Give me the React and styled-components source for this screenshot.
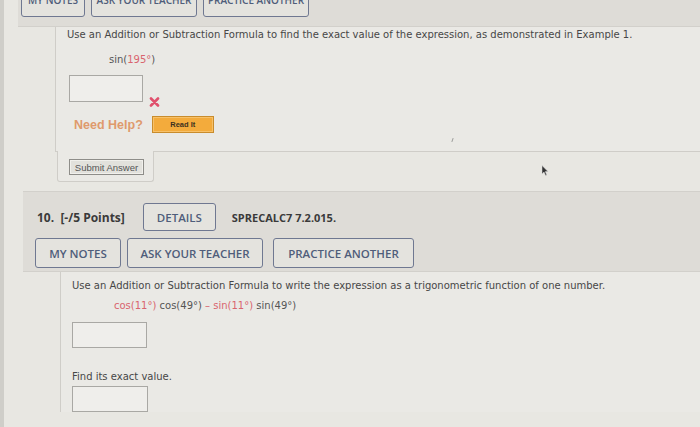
import React from "react";
import styled, { createGlobalStyle } from "styled-components";

const Global = createGlobalStyle`
  html, body { margin: 0; padding: 0; }
  body {
    background: #e7e6e1;
    width: 700px;
    height: 427px;
    overflow: hidden;
    font-family: "DejaVu Sans", Verdana, sans-serif;
  }
`;

const Page = styled.div`
  position: relative;
  width: 700px;
  height: 427px;
  overflow: hidden;
  border-left: 4px solid #cfcec9;
  box-sizing: border-box;
  background: #e8e7e2;
`;

const QHeader = styled.div`
  margin-left: ${(p) => p.$left}px;
  margin-top: ${(p) => p.$top}px;
  background: #dedcd7;
  border-top: 1px solid #d2d0cb;
  border-bottom: 1px solid #d2d0cb;
  padding: ${(p) => p.$pad};
  display: flex;
  flex-direction: column;
  gap: ${(p) => p.$gap || 8}px;
`;

const Row = styled.div`
  display: flex;
  align-items: center;
  gap: ${(p) => p.$gap}px;
`;

const OutlineBtn = styled.div`
  box-sizing: border-box;
  height: ${(p) => p.$h || 28}px;
  width: ${(p) => p.$w}px;
  margin-left: ${(p) => p.$ml || 0}px;
  border: 1.5px solid #6f7891;
  border-radius: 3px;
  background: #e4e3de;
  display: flex;
  align-items: center;
  justify-content: center;
  white-space: nowrap;
  overflow: hidden;
  font-family: "Open Sans", sans-serif;
  font-weight: 600;
  font-size: ${(p) => p.$fs || 11.5}px;
  color: #4f5d7a;
`;

const HeadText = styled.span`
  font-family: "Open Sans", sans-serif;
  font-weight: 700;
  font-size: ${(p) => p.$fs || 12}px;
  color: #3a3a3a;
  white-space: pre;
  margin-left: ${(p) => p.$ml || 0}px;
  margin-right: ${(p) => p.$mr || 0}px;
`;

const Body = styled.div`
  margin-left: ${(p) => p.$left}px;
  background: #eae9e5;
  border-left: 1px solid #cfcdc8;
  border-bottom: ${(p) => (p.$bottom ? "1px solid #cfcdc8" : "none")};
  padding: ${(p) => p.$pad};
  display: flex;
  flex-direction: column;
  align-items: flex-start;
  height: ${(p) => (p.$h ? p.$h + "px" : "auto")};
  box-sizing: border-box;
`;

const Prompt = styled.div`
  font-size: 10px;
  line-height: 12px;
  color: #474747;
  white-space: nowrap;
  margin-bottom: ${(p) => p.$mb || 0}px;
`;

const Expr = styled.div`
  font-size: 10px;
  line-height: 12px;
  color: #555;
  margin-left: ${(p) => p.$ml}px;
  margin-bottom: ${(p) => p.$mb || 0}px;
  white-space: pre;
`;

const Red = styled.span`
  color: #d9646e;
`;

const AnswerBox = styled.div`
  box-sizing: border-box;
  width: ${(p) => p.$w || 74}px;
  height: ${(p) => p.$h || 27}px;
  border: 1px solid #a9a8a4;
  background: #efeeeb;
  margin-left: ${(p) => p.$ml || 0}px;
  margin-bottom: ${(p) => p.$mb || 0}px;
`;

const AnswerRow = styled.div`
  display: flex;
  align-items: flex-end;
  gap: 6px;
`;

const HelpRow = styled.div`
  display: flex;
  align-items: center;
  gap: 9px;
  margin-left: 7px;
  margin-top: 14px;
`;

const NeedHelp = styled.span`
  font-family: "Liberation Sans", Arial, sans-serif;
  font-weight: 700;
  font-size: 12.5px;
  color: #df9a6c;
`;

const ReadIt = styled.div`
  box-sizing: border-box;
  width: 62px;
  height: 17px;
  background: #f3ab3c;
  border: 1px solid #c98c2c;
  box-shadow: inset 0 0 0 1px #f7c169;
  display: flex;
  align-items: center;
  justify-content: center;
  font-family: "Liberation Sans", Arial, sans-serif;
  font-weight: 700;
  font-size: 7.5px;
  color: #3b3020;
`;

const SubmitTab = styled.div`
  margin-left: 53px;
  width: 97px;
  height: 31px;
  margin-top: -1px;
  box-sizing: border-box;
  background: #eae9e5;
  border: 1px solid #cfcdc8;
  border-top: none;
  border-radius: 0 0 3px 3px;
  padding: 8px 0 0 11px;
`;

const SubmitBtn = styled.div`
  box-sizing: border-box;
  width: 75px;
  height: 16px;
  border: 1px solid #8e8d89;
  background: #e2e1dc;
  box-shadow: inset 0 0 0 1px #f1f0ec;
  display: flex;
  align-items: center;
  justify-content: center;
  font-family: "Liberation Sans", Arial, sans-serif;
  font-size: 9.5px;
  color: #555;
`;

const Cursor = styled.svg`
  position: absolute;
  left: 537px;
  top: 165px;
`;

const Speck = styled.div`
  position: absolute;
  left: ${(p) => p.$x}px;
  top: ${(p) => p.$y}px;
  width: 1px;
  height: 4px;
  background: #777;
  transform: rotate(20deg);
  opacity: 0.7;
`;

export default function App() {
  return (
    <>
      <Global />
      <Page>
        <QHeader $left={14} $top={-19} $pad="0 0 9px 3px">
          <Row $gap={6}>
            <OutlineBtn $w={64} $h={35} $fs={10}>MY NOTES</OutlineBtn>
            <OutlineBtn $w={106} $h={35} $fs={10}>ASK YOUR TEACHER</OutlineBtn>
            <OutlineBtn $w={106} $h={35} $fs={10}>PRACTICE ANOTHER</OutlineBtn>
          </Row>
        </QHeader>
        <Body $left={51} $bottom $h={125} $pad="2px 0 0 11px">
          <Prompt $mb={13}>
            Use an Addition or Subtraction Formula to find the exact value of the expression, as demonstrated in Example 1.
          </Prompt>
          <Expr $ml={42} $mb={9}>
            sin(<Red>195°</Red>)
          </Expr>
          <AnswerRow>
            <AnswerBox $ml={2} $w={74} $h={27} />
            <svg width="11" height="10" viewBox="0 0 11 10" style={{ marginBottom: -5 }}>
              <path d="M2 1.5 L9 8.5 M9 1.5 L2 8.5" stroke="#e0506c" strokeWidth="2.6" strokeLinecap="round" />
            </svg>
          </AnswerRow>
          <HelpRow>
            <NeedHelp>Need Help?</NeedHelp>
            <ReadIt>Read It</ReadIt>
          </HelpRow>
        </Body>
        <SubmitTab>
          <SubmitBtn>Submit Answer</SubmitBtn>
        </SubmitTab>
        <QHeader $left={19} $top={9} $pad="11px 0 3px 12px" $gap={7}>
          <Row $gap={0}>
            <HeadText $ml={2} $mr={18}>10.  [-/5 Points]</HeadText>
            <OutlineBtn $w={73} $h={28}>DETAILS</OutlineBtn>
            <HeadText $ml={16} $fs={11}>SPRECALC7 7.2.015.</HeadText>
          </Row>
          <Row $gap={0}>
            <OutlineBtn $w={86} $h={30}>MY NOTES</OutlineBtn>
            <OutlineBtn $w={136} $h={30} $ml={6}>ASK YOUR TEACHER</OutlineBtn>
            <OutlineBtn $w={141} $h={30} $ml={10}>PRACTICE ANOTHER</OutlineBtn>
          </Row>
        </QHeader>
        <Body $left={56} $pad="8px 0 0 11px">
          <Prompt $mb={8}>
            Use an Addition or Subtraction Formula to write the expression as a trigonometric function of one number.
          </Prompt>
          <Expr $ml={42} $mb={10}>
            <Red>cos(11°)</Red> cos(49°) <Red>–</Red> <Red>sin(11°)</Red> sin(49°)
          </Expr>
          <AnswerBox $w={75} $h={26} $mb={23} />
          <Prompt $mb={3}>Find its exact value.</Prompt>
          <AnswerBox $w={76} $h={26} />
        </Body>
        <Cursor width="8" height="11" viewBox="0 0 8 11">
          <path d="M1 0.5 L1 9 L3 7 L4.6 10.5 L5.8 10 L4.3 6.6 L7 6.6 Z" fill="#333" stroke="#ddd" strokeWidth="0.5" />
        </Cursor>
        <Speck $x={448} $y={138} />
      </Page>
    </>
  );
}
